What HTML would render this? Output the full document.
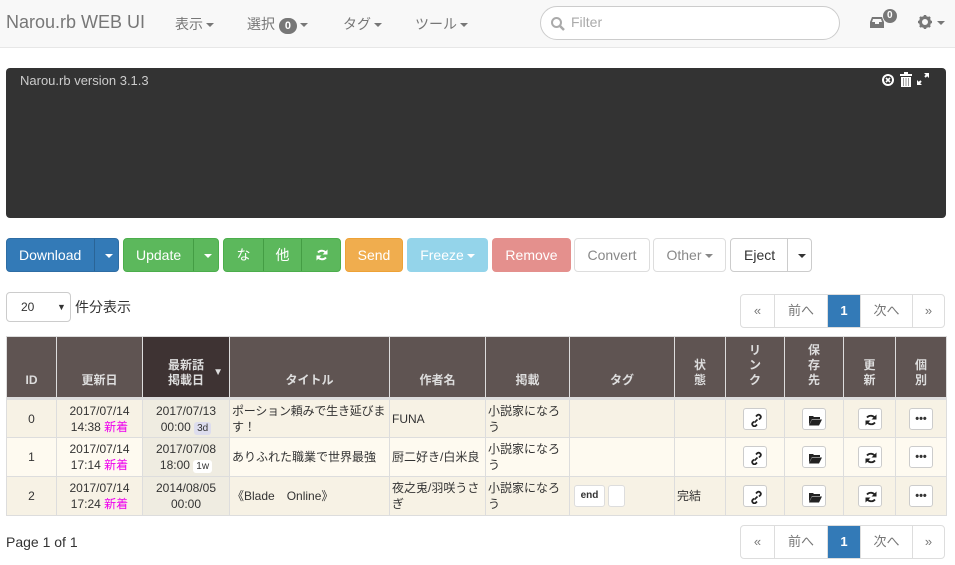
<!DOCTYPE html>
<html><head><meta charset="utf-8"><style>
*{box-sizing:border-box;margin:0;padding:0}
body{width:955px;height:565px;overflow:hidden;background:#fff;font-family:"Liberation Sans","Noto Sans CJK JP",sans-serif;font-size:13px;color:#333;position:relative}
.abs{position:absolute}
.nav{left:0;top:0;width:955px;height:48px;background:#f8f8f8;border-bottom:1px solid #e7e7e7}
.nav .t{position:absolute;top:12px;font-size:18px;color:#777}
.nav .m{position:absolute;top:14px;font-size:14px;color:#777}
.caret{display:inline-block;width:0;height:0;border-left:4px solid transparent;border-right:4px solid transparent;border-top:4px solid #777;vertical-align:middle;margin-left:3px}
.badge{display:inline-block;background:#777;color:#fff;border-radius:9px;font-size:11px;font-weight:bold;padding:1px 6px;line-height:14px}
.console{left:6px;top:68px;width:940px;height:150px;background:#333;border-radius:4px}
.btn{position:absolute;top:238px;height:34px;border-radius:4px;font-size:14px;line-height:32px;text-align:center;border:1px solid transparent}
.pg{position:absolute;height:34px;display:flex;border:1px solid #ddd;border-radius:4px;overflow:hidden}
.pg div{border-left:1px solid #ddd;line-height:32px;text-align:center;color:#777;font-size:13px}
.pg div:first-child{border-left:none}
.pg .a{background:#337ab7;color:#fff;font-weight:bold}
table{position:absolute;left:6px;top:336px;border-collapse:collapse;table-layout:fixed;width:940px}
th{background:#5f5452;color:#ddd;font-size:12px;font-weight:bold;border:1px solid #ddd;vertical-align:bottom;padding:0 0 9px;height:62px;line-height:15px;border-bottom:3px solid #ddd}
th.s{background:#3e3333}
td{border:1px solid #ddd;font-size:12px;text-align:center;height:39px;line-height:16px;padding:0 2px}
tr.o td{background:#f7f2e5}tr.e td{background:#fefaf0}
td.c2{background:#efece1!important}
td.l{text-align:left}
.n{color:#e0e}
.ib{display:inline-block;width:24px;height:22px;border:1px solid #ccc;border-radius:3px;background:#fff;vertical-align:middle;line-height:20px;font-size:11px;font-weight:bold;color:#333;position:relative}
.ib svg{position:absolute;left:5px;top:4px}
.sm{display:inline-block;font-size:10px;border-radius:3px;padding:0 3px;line-height:13px}
</style></head><body>
<svg width="0" height="0" style="position:absolute"><defs>
<g id="lk"><path d="M7 3.5l1.5-1.5a2.2 2.2 0 0 1 3 3L10 6.5M5 8.5L3.5 10a2.2 2.2 0 0 0 3 3L8 11.5" fill="none" stroke="#222" stroke-width="1.8"/><path d="M5.5 9.5l3-3" stroke="#222" stroke-width="1.6"/></g>
<g id="fd"><path d="M1 3h4l1 1h6v2H4L1 12z" fill="#222"/><path d="M4 6.5h10l-3 6H1z" fill="#222"/></g>
<g id="rf"><path d="M11.5 6A5 5 0 0 0 3 4.5M2.5 8A5 5 0 0 0 11 9.5" fill="none" stroke="#222" stroke-width="1.8"/><path d="M12.5 1.5v5h-5zM1.5 12.5v-5h5z" fill="#222"/></g>
</defs></svg>
<div class="abs nav">
<div class="t" style="left:6px">Narou.rb WEB UI</div>
<div class="m" style="left:175px">表示<span class="caret"></span></div>
<div class="m" style="left:247px">選択 <span class="badge">0</span><span class="caret"></span></div>
<div class="m" style="left:343px">タグ<span class="caret"></span></div>
<div class="m" style="left:415px">ツール<span class="caret"></span></div>
<div class="abs" style="left:540px;top:6px;width:300px;height:34px;border:1px solid #ccc;border-radius:17px;background:#fff">
<svg class="abs" style="left:9px;top:9px" width="16" height="16"><circle cx="6.5" cy="6.5" r="4.5" fill="none" stroke="#aaa" stroke-width="2"/><path d="M10 10l4 4" stroke="#aaa" stroke-width="2.5"/></svg>
<span class="abs" style="left:30px;top:7px;font-size:14px;color:#aaa">Filter</span></div>
<svg class="abs" style="left:869px;top:15px" width="16" height="15"><path d="M3 2h10l2 5v6H1V7z" fill="#777"/><path d="M4 4h8l1 3h-3v2H6V7H3z" fill="#f8f8f8"/></svg>
<span class="abs badge" style="left:883px;top:9px;padding:0 4px;font-size:10px">0</span>
<svg class="abs" style="left:917px;top:14px" width="16" height="16"><circle cx="8" cy="8" r="4.5" fill="none" stroke="#777" stroke-width="3"/><path d="M8 1v3M8 12v3M1 8h3M12 8h3M3 3l2 2M11 11l2 2M13 3l-2 2M3 13l2-2" stroke="#777" stroke-width="2.5"/></svg>
<span class="abs" style="left:934px;top:14px"><span class="caret"></span></span>
</div>
<div class="abs console"><span class="abs" style="left:14px;top:5px;color:#ccc;font-size:13px">Narou.rb version 3.1.3</span>
<svg class="abs" style="left:875px;top:5px" width="14" height="14"><circle cx="7" cy="7" r="6" fill="#fff"/><circle cx="7" cy="7" r="4" fill="#333"/><path d="M5 5l4 4M9 5l-4 4" stroke="#fff" stroke-width="1.6"/></svg>
<svg class="abs" style="left:894px;top:4px" width="12" height="15"><rect x="0" y="2" width="12" height="2" fill="#fff"/><rect x="4" y="0" width="4" height="2" fill="#fff"/><rect x="1" y="5" width="10" height="10" fill="#fff"/><path d="M3.5 6v8M6 6v8M8.5 6v8" stroke="#999" stroke-width="1"/></svg>
<svg class="abs" style="left:910px;top:4px" width="14" height="14"><path d="M8 1h5v5zM1 8v5h5z" fill="#fff"/><path d="M12 2L9 5M2 12l3-3" stroke="#fff" stroke-width="2"/></svg>
</div>
<div class="btn" style="left:6px;width:113px;background:#337ab7;color:#fff;border-color:#2e6da4;text-align:left;padding-left:12px">Download<span class="abs" style="left:87px;top:0;height:32px;border-left:1px solid #2a6496;width:25px;text-align:center"><span class="caret" style="border-top-color:#fff"></span></span></div>
<div class="btn" style="left:123px;width:96px;background:#5cb85c;color:#fff;border-color:#4cae4c;text-align:left;padding-left:12px">Update<span class="abs" style="left:69px;top:0;height:32px;border-left:1px solid #449d44;width:26px;text-align:center"><span class="caret" style="border-top-color:#fff"></span></span></div>
<div class="btn" style="left:223px;width:118px;background:#5cb85c;color:#fff;border-color:#4cae4c"><span class="abs" style="left:0;width:39px">な</span><span class="abs" style="left:39px;width:39px;border-left:1px solid #449d44;border-right:1px solid #449d44">他</span><span class="abs" style="left:78px;width:39px"><svg style="margin-top:9px" width="14" height="14"><path d="M11.5 6A5 5 0 0 0 3 4.5M2.5 8A5 5 0 0 0 11 9.5" fill="none" stroke="#fff" stroke-width="2"/><path d="M12.5 1.5v5h-5zM1.5 12.5v-5h5z" fill="#fff"/></svg></span></div>
<div class="btn" style="left:345px;width:58px;background:#f0ad4e;color:#fff;border-color:#eea236">Send</div>
<div class="btn" style="left:407px;width:81px;background:#94d4ea;color:#fff">Freeze<span class="caret" style="border-top-color:#fff"></span></div>
<div class="btn" style="left:492px;width:79px;background:#e4908d;color:#fff">Remove</div>
<div class="btn" style="left:574px;width:76px;background:#fff;color:#888;border-color:#ddd">Convert</div>
<div class="btn" style="left:653px;width:73px;background:#fff;color:#888;border-color:#ddd">Other<span class="caret" style="border-top-color:#888"></span></div>
<div class="btn" style="left:730px;width:82px;background:#fff;color:#333;border-color:#ccc;text-align:left;padding-left:13px">Eject<span class="abs" style="left:56px;top:0;height:32px;border-left:1px solid #ccc;width:25px;text-align:center"><span class="caret" style="border-top-color:#333"></span></span></div>
<div class="abs" style="left:6px;top:292px;width:65px;height:30px;border:1px solid #ccc;border-radius:4px;font-size:12px;line-height:28px;padding-left:14px">20<span class="abs" style="left:50px;font-size:9px">▼</span></div>
<div class="abs" style="left:75px;top:297px;font-size:14px">件分表示</div>
<div class="pg" style="left:740px;top:294px"><div style="width:33px">«</div><div style="width:53px">前へ</div><div class="a" style="width:33px">1</div><div style="width:52px">次へ</div><div style="width:32px">»</div></div>
<table>
<colgroup><col style="width:50px"><col style="width:86px"><col style="width:87px"><col style="width:160px"><col style="width:96px"><col style="width:84px"><col style="width:105px"><col style="width:51px"><col style="width:59px"><col style="width:59px"><col style="width:52px"><col style="width:51px"></colgroup>
<tr><th>ID</th><th>更新日</th><th class="s" style="position:relative">最新話<br>掲載日<span class="abs" style="right:6px;top:28px;font-size:10px">▼</span></th><th>タイトル</th><th>作者名</th><th>掲載</th><th>タグ</th><th>状<br>態</th><th>リ<br>ン<br>ク</th><th>保<br>存<br>先</th><th>更<br>新</th><th>個<br>別</th></tr>
<tr class="o"><td>0</td><td>2017/07/14<br>14:38 <span class="n">新着</span></td><td class="c2">2017/07/13<br>00:00 <span class="sm" style="background:#dde">3d</span></td><td class="l" style="padding-right:0;letter-spacing:-0.2px">ポーション頼みで生き延びます！</td><td class="l">FUNA</td><td class="l">小説家になろう</td><td></td><td></td><td><span class="ib"><svg width="14" height="14"><use href="#lk"/></svg></span></td><td><span class="ib"><svg width="14" height="14"><use href="#fd"/></svg></span></td><td><span class="ib"><svg width="14" height="14"><use href="#rf"/></svg></span></td><td><span class="ib">•••</span></td></tr>
<tr class="e"><td>1</td><td>2017/07/14<br>17:14 <span class="n">新着</span></td><td class="c2">2017/07/08<br>18:00 <span class="sm" style="background:#fff">1w</span></td><td class="l">ありふれた職業で世界最強</td><td class="l">厨二好き/白米良</td><td class="l">小説家になろう</td><td></td><td></td><td><span class="ib"><svg width="14" height="14"><use href="#lk"/></svg></span></td><td><span class="ib"><svg width="14" height="14"><use href="#fd"/></svg></span></td><td><span class="ib"><svg width="14" height="14"><use href="#rf"/></svg></span></td><td><span class="ib">•••</span></td></tr>
<tr class="o"><td>2</td><td>2017/07/14<br>17:24 <span class="n">新着</span></td><td class="c2">2014/08/05<br>00:00</td><td class="l">《Blade　Online》</td><td class="l">夜之兎/羽咲うさぎ</td><td class="l">小説家になろう</td><td class="l" style="padding-left:4px"><span class="ib" style="width:31px;font-size:10px;border-color:#ddd;text-align:center">end</span> <span class="ib" style="width:17px;border-color:#ddd"></span></td><td class="l">完結</td><td><span class="ib"><svg width="14" height="14"><use href="#lk"/></svg></span></td><td><span class="ib"><svg width="14" height="14"><use href="#fd"/></svg></span></td><td><span class="ib"><svg width="14" height="14"><use href="#rf"/></svg></span></td><td><span class="ib">•••</span></td></tr>
</table>
<div class="abs" style="left:6px;top:534px;font-size:14px">Page 1 of 1</div>
<div class="pg" style="left:740px;top:525px"><div style="width:33px">«</div><div style="width:53px">前へ</div><div class="a" style="width:33px">1</div><div style="width:52px">次へ</div><div style="width:32px">»</div></div>
</body></html>
